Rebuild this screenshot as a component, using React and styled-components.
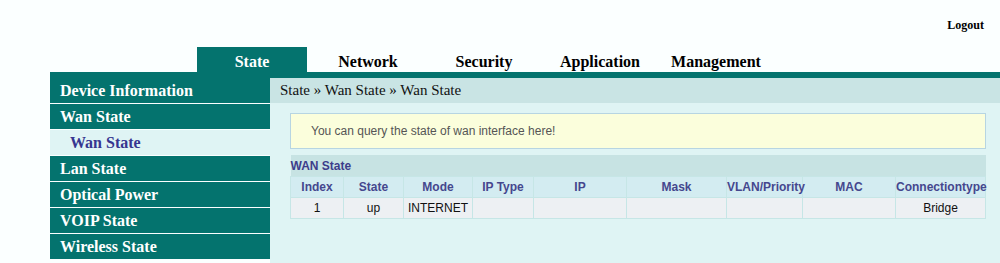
import React from "react";
import styled, { createGlobalStyle } from "styled-components";

const Global = createGlobalStyle`
  html, body { margin: 0; padding: 0; background: #fbffff; }
  body { font-family: "Liberation Serif", "Times New Roman", serif; }
`;

const TEAL = "#04736e";

const Page = styled.div`
  width: 1000px;
  min-height: 263px;
`;

const TopBar = styled.div`
  height: 47px;
  display: flex;
  justify-content: flex-end;
  align-items: flex-start;
  padding-right: 16px;
  box-sizing: border-box;
`;

const Logout = styled.a`
  margin-top: 17px;
  font: bold 12px/16px "Liberation Serif", serif;
  color: #000;
  text-decoration: none;
`;

const Nav = styled.div`
  margin-left: 50px;
  display: flex;
  gap: 6px;
  padding-left: 147px;
  height: 25px;
`;

const Tab = styled.div`
  width: 110px;
  height: 25px;
  box-sizing: border-box;
  padding-top: 4px;
  line-height: 21px;
  text-align: center;
  font-weight: bold;
  font-size: 16px;
  color: ${(p) => (p.$active ? "#fff" : "#000")};
  background: ${(p) => (p.$active ? TEAL : "transparent")};
`;

const TealLine = styled.div`
  margin-left: 50px;
  height: 6px;
  background: ${TEAL};
`;

const Main = styled.div`
  display: flex;
  margin-left: 50px;
  align-items: stretch;
`;

const Sidebar = styled.div`
  width: 220px;
  flex: none;
  display: flex;
  flex-direction: column;
  align-self: flex-start;
`;

const MenuItem = styled.div`
  height: 25px;
  line-height: 25px;
  border-bottom: 1px solid #fbffff;
  padding-left: ${(p) => (p.$sub ? "20px" : "10px")};
  background: ${(p) => (p.$sub ? "#dff4f4" : TEAL)};
  color: ${(p) => (p.$sub ? "#363690" : "#fff")};
  font-weight: bold;
  font-size: 16px;
  white-space: nowrap;
  &:last-child { border-bottom: none; }
`;

const Content = styled.div`
  flex: 1;
  background: #dff4f4;
  min-height: 185px;
`;

const Crumb = styled.div`
  height: 25px;
  line-height: 24px;
  background: #c9e4e4;
  padding-left: 10px;
  font-size: 15px;
  color: #111;
`;

const Body = styled.div`
  padding: 10px 15px 10px 20px;
`;

const Info = styled.div`
  height: 34px;
  border: 1px solid #b7d5e2;
  background: #fbfedc;
  display: flex;
  align-items: center;
  padding-left: 20px;
  font: 12px "Liberation Sans", Arial, sans-serif;
  color: #555;
`;

const Table = styled.table`
  margin-top: 6px;
  width: 100%;
  border-collapse: collapse;
  font: 12px "Liberation Sans", Arial, sans-serif;
  table-layout: fixed;
`;

const Caption = styled.th`
  height: 21px;
  padding: 0;
  text-align: left;
  background: #c7e3e3;
  color: #3d3d8b;
  font-weight: bold;
  font-size: 12px;
`;

const Th = styled.th`
  height: 20px;
  padding: 0;
  background: #d3ecf1;
  border: 1px solid #c6e6e6;
  color: #45478e;
  font-weight: bold;
  text-align: center;
  white-space: nowrap;
  overflow: visible;
`;

const Td = styled.td`
  height: 20px;
  padding: 0;
  background: #edf0f3;
  border: 1px solid #c6e6e6;
  color: #111;
  text-align: center;
`;

const columns = [
  ["Index", 53],
  ["State", 60],
  ["Mode", 69],
  ["IP Type", 61],
  ["IP", 93],
  ["Mask", 100],
  ["VLAN/Priority", 76],
  ["MAC", 93],
  ["Connectiontype", 90],
];

const row = ["1", "up", "INTERNET", "", "", "", "", "", "Bridge"];

const menu = [
  { label: "Device Information" },
  { label: "Wan State" },
  { label: "Wan State", sub: true },
  { label: "Lan State" },
  { label: "Optical Power" },
  { label: "VOIP State" },
  { label: "Wireless State" },
];

const tabs = ["State", "Network", "Security", "Application", "Management"];

export default function App() {
  return (
    <Page>
      <Global />
      <TopBar>
        <Logout href="#">Logout</Logout>
      </TopBar>
      <Nav>
        {tabs.map((t, i) => (
          <Tab key={t} $active={i === 0}>
            {t}
          </Tab>
        ))}
      </Nav>
      <TealLine />
      <Main>
        <Sidebar>
          {menu.map((m, i) => (
            <MenuItem key={i} $sub={m.sub}>
              {m.label}
            </MenuItem>
          ))}
        </Sidebar>
        <Content>
          <Crumb>State » Wan State » Wan State</Crumb>
          <Body>
            <Info>You can query the state of wan interface here!</Info>
            <Table>
              <colgroup>
                {columns.map(([c, w]) => (
                  <col key={c} style={{ width: w }} />
                ))}
              </colgroup>
              <thead>
                <tr>
                  <Caption colSpan={9}>WAN State</Caption>
                </tr>
                <tr>
                  {columns.map(([c]) => (
                    <Th key={c}>{c}</Th>
                  ))}
                </tr>
              </thead>
              <tbody>
                <tr>
                  {row.map((v, i) => (
                    <Td key={i}>{v}</Td>
                  ))}
                </tr>
              </tbody>
            </Table>
          </Body>
        </Content>
      </Main>
    </Page>
  );
}
